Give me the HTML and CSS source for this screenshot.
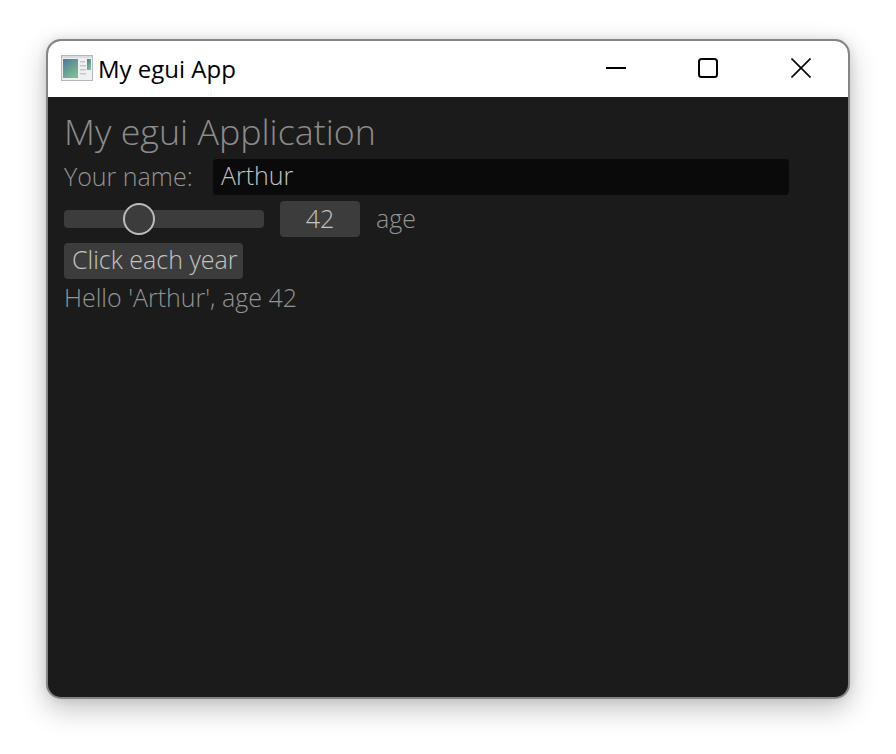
FILE: index.html
```html
<!DOCTYPE html>
<html>
	<head>
		<meta charset="UTF-8">
		<title>My egui App</title>
		<link rel="stylesheet" href="styles.css">
	</head>
	<body>
		<div class="window">
			<div class="titlebar">
				<svg class="app_icon" width="32" height="26" viewBox="0 0 32 26">
					<defs>
						<linearGradient id="pane" x1="0" y1="0" x2="0.6" y2="1">
							<stop offset="0" stop-color="#4a7a9c"/>
							<stop offset="1" stop-color="#7dbb92"/>
						</linearGradient>
					</defs>
					<rect x="0.5" y="0.5" width="31" height="25" fill="#eef0f2" stroke="#b3b9be"/>
					<rect x="1" y="1" width="30" height="2" fill="#d6dce1"/>
					<rect x="2" y="4" width="15" height="19" fill="url(#pane)"/>
					<rect x="19" y="6" width="5" height="1.5" fill="#c4c8cc"/>
					<rect x="19" y="10" width="6" height="1.5" fill="#c4c8cc"/>
					<rect x="19" y="14" width="6" height="1.5" fill="#c4c8cc"/>
					<rect x="19" y="18" width="6" height="1.5" fill="#c4c8cc"/>
					<rect x="26" y="4" width="4" height="11" fill="url(#pane)"/>
				</svg>
				<span class="win_title">My egui App</span>
				<div class="win_buttons">
					<div class="win_btn">
						<svg width="20" height="20" viewBox="0 0 20 20"><path d="M0 10H20" stroke="#000" stroke-width="2" fill="none"/></svg>
					</div>
					<div class="win_btn">
						<svg width="20" height="20" viewBox="0 0 20 20"><rect x="1" y="1" width="18" height="18" rx="2.5" stroke="#000" stroke-width="2" fill="none"/></svg>
					</div>
					<div class="win_btn">
						<svg width="20" height="20" viewBox="0 0 20 20"><path d="M0.5 0.5L19.5 19.5M19.5 0.5L0.5 19.5" stroke="#000" stroke-width="1.6" fill="none"/></svg>
					</div>
				</div>
			</div>
			<div class="content">
				<h1 class="heading">My egui Application</h1>
				<div class="row">
					<label class="name_label">Your name:</label>
					<div class="text_edit">Arthur</div>
				</div>
				<div class="row">
					<div class="slider">
						<div class="handle"></div>
					</div>
					<div class="drag_value">42</div>
					<span class="age_label">age</span>
				</div>
				<div class="row">
					<div class="button">Click each year</div>
				</div>
				<div class="hello">Hello 'Arthur', age 42</div>
			</div>
		</div>
	</body>
</html>
```

FILE: styles.css
```css
* {
	margin: 0;
	padding: 0;
	box-sizing: border-box;
}
html, body {
	height: 100%;
	background: #fff;
}
body {
	padding: 39px 46px 55px 46px;
	font-family: "Open Sans", "Lato", sans-serif;
	overflow: hidden;
}
.window {
	height: 660px;
	border: 2px solid #858585;
	border-radius: 15px;
	overflow: hidden;
	box-shadow: 0 10px 28px rgba(0, 0, 0, .24), 0 0 10px rgba(0, 0, 0, .1);
	display: flex;
	flex-direction: column;
	background: #1b1b1b;
}
.titlebar {
	height: 56px;
	background: #fff;
	display: flex;
	align-items: center;
	padding-left: 13px;
	flex-shrink: 0;
}
.app_icon {
	display: block;
	margin-top: -3px;
}
.win_title {
	font-family: "Open Sans", sans-serif;
	font-size: 24px;
	color: #000;
	margin-left: 5px;
	margin-top: -1px;
}
.win_buttons {
	margin-left: auto;
	display: flex;
	padding-right: 1px;
	margin-top: -3px;
}
.win_btn {
	width: 92.5px;
	display: flex;
	justify-content: center;
}
.win_btn svg {
	display: block;
}
.content {
	flex: 1;
	padding: 16px;
	display: flex;
	flex-direction: column;
	gap: 6px;
	color: #949494;
	font-size: 25px;
	font-weight: 300;
}
.heading {
	font-size: 35.8px;
	font-weight: 300;
	line-height: 40px;
	margin-top: -2px;
	margin-bottom: 2px;
	color: #8c8c8c;
}
.row {
	display: flex;
	align-items: center;
	height: 36px;
}
.name_label {
	width: 149px;
	margin-top: -3px;
}
.text_edit {
	width: 576px;
	height: 36px;
	line-height: 33px;
	padding-left: 8px;
	background: #0a0a0a;
	border-radius: 4px;
	color: #c4c4c4;
}
.slider {
	position: relative;
	width: 200px;
	height: 18px;
	background: #3c3c3c;
	border-radius: 4px;
}
.handle {
	position: absolute;
	left: 59px;
	top: -7px;
	width: 32px;
	height: 32px;
	border: 2.5px solid #bcbcbc;
	border-radius: 50%;
	background: #3c3c3c;
}
.drag_value {
	margin-left: 16px;
	width: 80px;
	height: 36px;
	line-height: 34px;
	text-align: center;
	background: #3c3c3c;
	border-radius: 4px;
	color: #c4c4c4;
}
.age_label {
	margin-left: 16px;
	margin-top: -3px;
}
.button {
	width: 179px;
	height: 36px;
	line-height: 33px;
	padding-left: 8px;
	background: #3c3c3c;
	border-radius: 4px;
	color: #c4c4c4;
	white-space: nowrap;
}
.hello {
	line-height: 24px;
}
```
